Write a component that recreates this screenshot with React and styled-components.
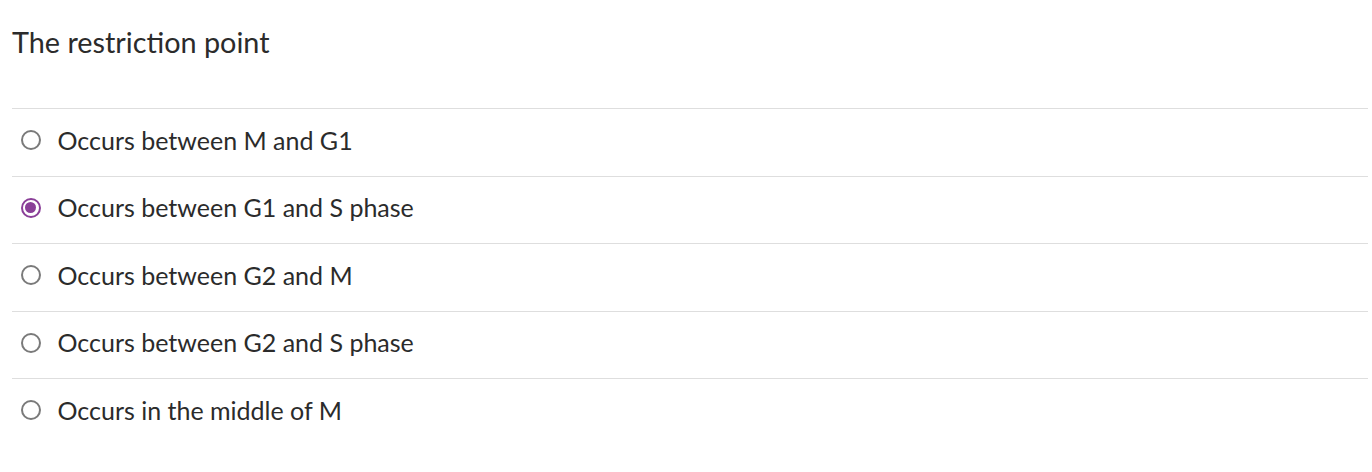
import React from 'react';
import styled, { createGlobalStyle } from 'styled-components';

const GlobalStyle = createGlobalStyle`
    body {
        margin: 0;
        background: #ffffff;
        font-family: Lato, "Noto Sans", sans-serif;
        color: #2d3b45;
    }
`;

const StyledQuestion = styled.section`
    padding: 0 4px 0 12px;
`;
const StyledQuestion__Heading = styled.h2`
    margin: 0;
    padding: 24px 0 48px;
    font-size: 28.8px;
    font-weight: 400;
    line-height: 36px;
    color: #2b2b2b;
    border-bottom: 1px solid #dedede;
`;
const StyledAnswers = styled.ul`
    list-style: none;
    margin: 0;
    padding: 0;
`;
const StyledAnswer = styled.li`
    display: flex;
    align-items: center;
    gap: 17px;
    height: 66.5px;
    padding-left: 9px;
    font-size: 25px;
    line-height: 30px;
    color: #2b2b2b;
    border-bottom: ${({ $last }) => ($last ? 'none' : '1px solid #dedede')};
`;
const StyledAnswer__Text = styled.span`
    margin-top: -5px;
`;
const StyledRadio = styled.span`
    box-sizing: border-box;
    width: 20px;
    height: 20px;
    margin-left: -0.5px;
    margin-top: -4px;
    flex-shrink: 0;
    border-radius: 50%;
    border: 2px solid ${({ $checked }) => ($checked ? '#8a3f98' : '#7a7a7a')};
    display: flex;
    justify-content: center;
    align-items: center;
    &::after {
        content: '';
        width: 11px;
        height: 11px;
        border-radius: 50%;
        background: ${({ $checked }) => ($checked ? '#8a3f98' : 'transparent')};
    }
`;

const answers = [
    { id: 1, text: 'Occurs between M and G1' },
    { id: 2, text: 'Occurs between G1 and S phase', checked: true },
    { id: 3, text: 'Occurs between G2 and M' },
    { id: 4, text: 'Occurs between G2 and S phase' },
    { id: 5, text: 'Occurs in the middle of M' },
];

function App() {
    return (
        <>
            <GlobalStyle />
            <StyledQuestion>
                <StyledQuestion__Heading>The restriction point</StyledQuestion__Heading>
                <StyledAnswers>
                    {answers.map((answer, i) => (
                        <StyledAnswer key={answer.id} $last={i === answers.length - 1}>
                            <StyledRadio $checked={answer.checked} />
                            <StyledAnswer__Text>{answer.text}</StyledAnswer__Text>
                        </StyledAnswer>
                    ))}
                </StyledAnswers>
            </StyledQuestion>
        </>
    );
}

export default App;
